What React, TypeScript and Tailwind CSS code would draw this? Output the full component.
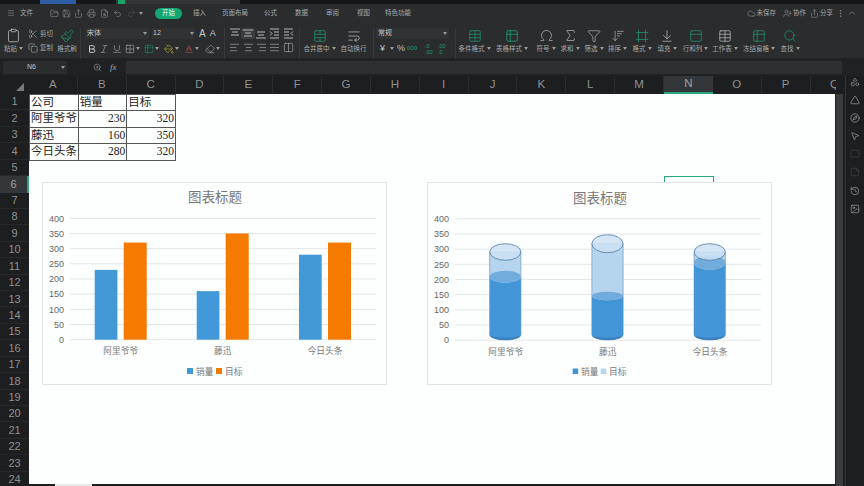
import {
  AlignCenter, AlignJustify, AlignLeft, AlignRight, Bold, ChevronUp, Clipboard, Cloud, Copy, Eraser, FileSearch,
  FolderOpen, Grid2x2, History, Image, Italic, Menu, MousePointer2, MoreVertical, PaintBucket, Paintbrush,
  Printer, Redo2, Save, Scissors, Search, Share, Sigma, Filter, Undo2, Underline, UserPlus, Omega, ZoomIn,
  Shapes, Compass, Triangle, MessageSquare, StickyNote, Columns2, Table2, Table, PanelTop, ArrowDownWideNarrow,
  Frame, ArrowDownToLine, Baseline, WrapText, TableCellsMerge,
} from "lucide-react"
import type { ReactNode } from "react"

const COLUMNS = ["A", "B", "C", "D", "E", "F", "G", "H", "I", "J", "K", "L", "M", "N", "O", "P", "Q"]
const ROWS = Array.from({ length: 24 }, (_, i) => i + 1)
const DATA = [
  { name: "阿里爷爷", sales: 230, target: 320 },
  { name: "藤迅", sales: 160, target: 350 },
  { name: "今日头条", sales: 280, target: 320 },
]
const TICKS = [0, 50, 100, 150, 200, 250, 300, 350, 400]
const CENTERS = [120.7, 222.7, 325]

const yOf = (v: number) => 339.7 - v * 0.3035

function Caret() {
  return (
    <svg width="4" height="3" viewBox="0 0 4 3" className="shrink-0">
      <path d="M0 0h4L2 3z" fill="#9a9a9a" />
    </svg>
  )
}

function Tool({ width, label, caret, children }: { width: string; label: string; caret?: boolean; children: ReactNode }) {
  return (
    <div className={`${width} flex flex-col items-center shrink-0`}>
      <div className="h-[15px] flex items-center justify-center">{children}</div>
      <div className="mt-[1px] flex items-center gap-[2px] text-[6.5px] leading-[9px] text-[#a6a8a8] whitespace-nowrap">
        {label}
        {caret && <Caret />}
      </div>
    </div>
  )
}

function Sep() {
  return <div className="w-px h-[32px] bg-[#37393b] shrink-0" />
}

function VAlign({ pos }: { pos: "top" | "mid" | "bottom" }) {
  const d = { top: "M1 1h10M3 4h6M2 7h8", mid: "M1 2h10M3 5h6M2 8h8", bottom: "M2 4h8M3 7h6M1 10h10" }[pos]
  return (
    <svg width="12" height="11" viewBox="0 0 12 11" fill="none" stroke="#b4b6b6" strokeWidth="1">
      <path d={d} />
    </svg>
  )
}

function Indent({ flip }: { flip?: boolean }) {
  return (
    <svg width="11" height="11" viewBox="0 0 11 11" fill="none" stroke="#b4b6b6" strokeWidth="1" className={flip ? "-scale-x-100" : ""}>
      <path d="M1 1h9M5 4h5M5 7h5M1 10h9M1 3.5 3 5.5 1 7.5" />
    </svg>
  )
}

function Ribbon() {
  const ic = "text-[#bfc1c1]"
  const gr = "text-[#1f9d72]"
  return (
    <div className="h-[36px] flex items-start pt-[6px]">
      {/* clipboard */}
      <div className="w-[80px] shrink-0 flex pl-[3px]">
        <Tool width="w-[21px]" label="粘贴" caret>
          <Clipboard size={15} strokeWidth={1.2} className={ic} />
        </Tool>
        <div className="w-[32px] pl-[4px] flex flex-col gap-[4px] pt-[1px] text-[6.5px] leading-[10px] text-[#a6a8a8]">
          <div className="flex items-center gap-[2px]"><Scissors size={10} strokeWidth={1.2} className={ic} />剪切</div>
          <div className="flex items-center gap-[2px]"><Copy size={10} strokeWidth={1.2} className={ic} />复制</div>
        </div>
        <Tool width="w-[22px]" label="格式刷">
          <Paintbrush size={14} strokeWidth={1.2} className={gr} />
        </Tool>
      </div>
      <Sep />
      {/* font */}
      <div className="w-[143px] shrink-0 pl-[4px] flex flex-col gap-[3px]">
        <div className="h-[11px] flex items-center text-[7px] text-[#c4c6c6]">
          <div className="w-[64px] h-[11px] bg-[#303234] flex items-center justify-between px-[2px]">宋体<Caret /></div>
          <div className="ml-[3px] w-[43px] h-[11px] bg-[#303234] flex items-center justify-between px-[1px]">12<Caret /></div>
          <span className="ml-[4px] text-[10px] leading-[11px] font-['Liberation_Sans',sans-serif]">A</span>
          <span className="ml-[4px] text-[9px] leading-[11px] font-['Liberation_Sans',sans-serif]">A</span>
        </div>
        <div className="h-[13px] flex items-center">
          <div className="w-[13px] flex justify-center"><Bold size={10} strokeWidth={2.2} className="text-[#d0d2d2]" /></div>
          <div className="w-[12px] flex justify-center"><Italic size={10} strokeWidth={1.2} className={ic} /></div>
          <div className="w-[13px] flex justify-center"><Underline size={10} strokeWidth={1.2} className={ic} /></div>
          <div className="w-[19px] flex justify-center items-center gap-[1px]"><Grid2x2 size={10} strokeWidth={1.2} className={ic} /><Caret /></div>
          <div className="w-[19px] flex justify-center items-center gap-[1px]"><Table2 size={10} strokeWidth={1.2} className={gr} /><Caret /></div>
          <div className="w-[21px] flex justify-center items-center gap-[1px]"><PaintBucket size={10} strokeWidth={1.2} className="text-[#d8c83c]" /><Caret /></div>
          <div className="w-[18px] flex justify-center items-center gap-[1px]"><Baseline size={10} strokeWidth={1.4} className="text-[#c2524a]" /><Caret /></div>
          <div className="w-[24px] flex justify-center items-center gap-[1px]"><Eraser size={10} strokeWidth={1.2} className={ic} /><Caret /></div>
        </div>
      </div>
      <Sep />
      {/* alignment */}
      <div className="w-[74px] shrink-0 pl-[3px]">
        <div className="w-[67px] grid grid-cols-5 gap-y-[3px] justify-items-center items-center">
          <VAlign pos="top" />
          <div className="bg-[#3a3c3e] rounded-[2px] px-[1px]"><VAlign pos="mid" /></div>
          <VAlign pos="bottom" />
          <Indent />
          <Indent flip />
          <AlignLeft size={11} strokeWidth={1.2} className={ic} />
          <AlignCenter size={11} strokeWidth={1.2} className={ic} />
          <AlignRight size={11} strokeWidth={1.2} className={ic} />
          <AlignJustify size={11} strokeWidth={1.2} className={ic} />
          <Columns2 size={11} strokeWidth={1.2} className={ic} />
        </div>
      </div>
      <Sep />
      {/* merge */}
      <div className="w-[73px] shrink-0 flex pl-[3px]">
        <Tool width="w-[33px]" label="合并居中" caret>
          <TableCellsMerge size={14} strokeWidth={1.2} className={gr} />
        </Tool>
        <Tool width="w-[35px]" label="自动换行">
          <WrapText size={14} strokeWidth={1.2} className={ic} />
        </Tool>
      </div>
      <Sep />
      {/* number */}
      <div className="w-[81px] shrink-0 pl-[2px] flex flex-col gap-[3px]">
        <div className="w-[73px] h-[11px] bg-[#303234] flex items-center justify-between px-[2px] text-[7px] text-[#c4c6c6]">常规<Caret /></div>
        <div className="h-[13px] flex items-center text-[9px] text-[#c4c6c6] font-['Liberation_Sans',sans-serif]">
          <span className="w-[12px] pl-[4px]">¥</span>
          <span className="ml-[2px]"><Caret /></span>
          <span className="ml-[3px]">%</span>
          <span className="ml-[2px] text-[6px] text-[#1f9d72]">000</span>
          <span className="ml-[8px] text-[5.5px] leading-[6px] text-[#1f9d72] w-[10px]">.0 .00</span>
          <span className="ml-[3px] text-[5.5px] leading-[6px] text-[#1f9d72] w-[10px]">.00 .0</span>
        </div>
      </div>
      <Sep />
      {/* tools */}
      <Tool width="w-[37px]" label="条件格式" caret><Table size={14} strokeWidth={1.2} className={gr} /></Tool>
      <Tool width="w-[38px]" label="表格样式" caret><Table2 size={14} strokeWidth={1.4} className={gr} /></Tool>
      <div className="w-[4px] shrink-0" />
      <Tool width="w-[22px]" label="符号" caret><Omega size={15} strokeWidth={1.1} className={ic} /></Tool>
      <div className="w-px shrink-0" />
      <Tool width="w-[24px]" label="求和" caret><Sigma size={15} strokeWidth={1.1} className={ic} /></Tool>
      <Tool width="w-[24px]" label="筛选" caret><Filter size={14} strokeWidth={1.1} className={ic} /></Tool>
      <Tool width="w-[23px]" label="排序" caret><ArrowDownWideNarrow size={14} strokeWidth={1.1} className={ic} /></Tool>
      <Tool width="w-[26px]" label="格式" caret><Frame size={14} strokeWidth={1.2} className={gr} /></Tool>
      <Tool width="w-[24px]" label="填充" caret><ArrowDownToLine size={14} strokeWidth={1.2} className={ic} /></Tool>
      <Tool width="w-[33px]" label="行和列" caret><PanelTop size={14} strokeWidth={1.2} className={gr} /></Tool>
      <Tool width="w-[26px]" label="工作表" caret><Table size={14} strokeWidth={1.2} className={ic} /></Tool>
      <Tool width="w-[42px]" label="冻结窗格" caret><Table2 size={14} strokeWidth={1.2} className={gr} /></Tool>
      <Tool width="w-[20px]" label="查找" caret><Search size={14} strokeWidth={1.2} className={gr} /></Tool>
    </div>
  )
}

function TabBar() {
  const ic = "text-[#a8aaaa]"
  return (
    <div className="h-[18px] flex items-center text-[6.5px] text-[#a8aaaa] whitespace-nowrap">
      <Menu size={8} strokeWidth={1.4} className={`ml-[7px] ${ic}`} />
      <span className="ml-[5px] w-[24px]">文件</span>
      <div className="w-[6px]" />
      <div className="flex items-center gap-[3px]">
        <FolderOpen size={9} strokeWidth={1.2} className={ic} />
        <Save size={9} strokeWidth={1.2} className={ic} />
        <Share size={9} strokeWidth={1.2} className={ic} />
        <Printer size={9} strokeWidth={1.2} className={`ml-[1px] ${ic}`} />
        <FileSearch size={9} strokeWidth={1.2} className={`ml-[1px] ${ic}`} />
        <Undo2 size={9} strokeWidth={1.2} className={`ml-[1px] ${ic}`} />
        <Redo2 size={9} strokeWidth={1.2} className="ml-[2px] text-[#58595a]" />
        <Caret />
      </div>
      <span className="ml-[12px] w-[27px] h-[11px] rounded-full bg-[#12a672] text-[#e8f5ef] flex items-center justify-center">开始</span>
      <span className="ml-[11px]">插入</span>
      <span className="ml-[16px]">页面布局</span>
      <span className="ml-[16px]">公式</span>
      <span className="ml-[18px]">数据</span>
      <span className="ml-[18px]">审阅</span>
      <span className="ml-[18px]">视图</span>
      <span className="ml-[15px]">特色功能</span>
      <div className="ml-auto flex items-center pr-[7px]">
        <Cloud size={9} strokeWidth={1.2} className={ic} />
        <span className="ml-[1px]">未保存</span>
        <UserPlus size={9} strokeWidth={1.2} className={`ml-[7px] ${ic}`} />
        <span className="ml-[1px]">协作</span>
        <Share size={9} strokeWidth={1.2} className={`ml-[4px] ${ic}`} />
        <span className="ml-[1px]">分享</span>
        <MoreVertical size={9} strokeWidth={1.2} className={`ml-[3px] ${ic}`} />
        <ChevronUp size={10} strokeWidth={1.2} className={`ml-[2px] ${ic}`} />
      </div>
    </div>
  )
}

function ChartFrame({ left, children, view }: { left: string; children: ReactNode; view: string }) {
  return (
    <div className={`absolute ${left} top-[88px] w-[345px] h-[203px] border border-[#dfe5e8] bg-[#fdffff]`}>
      <svg width="343" height="201" viewBox={view} className="block">
        <text x="215" y="202" textAnchor="middle" className="text-[13.5px] fill-[#777]">图表标题</text>
        {TICKS.map((t) => (
          <g key={t}>
            <line x1="70" x2="376" y1={yOf(t)} y2={yOf(t)} stroke="#e2e7ea" strokeWidth="1" />
            <text x="64" y={yOf(t) + 3.2} textAnchor="end" className="text-[9px] fill-[#666]">{t}</text>
          </g>
        ))}
        {DATA.map((d, i) => (
          <text key={d.name} x={CENTERS[i]} y="354" textAnchor="middle" className="text-[8.7px] fill-[#777]">{d.name}</text>
        ))}
        {children}
      </svg>
    </div>
  )
}

function BarChart() {
  return (
    <ChartFrame left="left-[13px]" view="43 183 343 201">
      {DATA.map((d, i) => {
        const x = [94.7, 196.7, 299][i]
        return (
          <g key={d.name}>
            <rect x={x} y={yOf(d.sales)} width="22.7" height={d.sales * 0.3035} fill="#4399d8" />
            <rect x={x + 29} y={yOf(d.target)} width="23" height={d.target * 0.3035} fill="#f57a00" />
          </g>
        )
      })}
      <rect x="187" y="368" width="6" height="6" fill="#4399d8" />
      <text x="196" y="374.5" className="text-[8.7px] fill-[#777]">销量</text>
      <rect x="216" y="368" width="6" height="6" fill="#f57a00" />
      <text x="225" y="374.5" className="text-[8.7px] fill-[#777]">目标</text>
    </ChartFrame>
  )
}

function Cylinder({ cx, top, topRy, level, levelRy }: { cx: number; top: number; topRy: number; level: number; levelRy: number }) {
  const rx = 15.6
  const bottom = 334.2
  const bodyBack = `M${cx - rx} ${top}V${bottom}A${rx} 5.3 0 0 0 ${cx + rx} ${bottom}V${top}Z`
  const liquid = `M${cx - rx} ${level}V${bottom}A${rx} 5.3 0 0 0 ${cx + rx} ${bottom}V${level}A${rx} ${levelRy} 0 0 1 ${cx - rx} ${level}Z`
  return (
    <g>
      <path d={bodyBack} fill="#b5d4ee" stroke="#7fa3c0" strokeWidth="0.8" />
      <path d={liquid} fill="#4295d6" />
      <path d={`M${cx - rx} ${bottom}A${rx} 5.3 0 0 0 ${cx + rx} ${bottom}A${rx} 3 0 0 1 ${cx - rx} ${bottom}Z`} fill="#3a80bd" />
      <ellipse cx={cx} cy={level} rx={rx} ry={levelRy} fill="#72acdc" />
      <ellipse cx={cx} cy={top} rx={rx} ry={topRy} fill="#cde2f4" fillOpacity="0.85" stroke="#5f86a6" strokeWidth="0.9" />
    </g>
  )
}

function CylinderChart() {
  return (
    <ChartFrame left="left-[398px]" view="43 182.5 343 201">
      <Cylinder cx={120.3} top={251.5} topRy={8.3} level={276.2} levelRy={6} />
      <Cylinder cx={222.5} top={243.2} topRy={9} level={295.5} levelRy={4.2} />
      <Cylinder cx={324.7} top={251.5} topRy={8.3} level={262.2} levelRy={7.3} />
      <rect x="187.7" y="368" width="5.5" height="5.5" fill="#4295d6" />
      <text x="196" y="374.5" className="text-[8.7px] fill-[#777]">销量</text>
      <rect x="215.7" y="368" width="5.5" height="5.5" fill="#b5d4ee" />
      <text x="224" y="374.5" className="text-[8.7px] fill-[#777]">目标</text>
    </ChartFrame>
  )
}

function SideBar() {
  const ic = "text-[#b0b2b2]"
  const dim = "text-[#4c4e50]"
  return (
    <div className="w-[19px] h-full border-l border-[#33353a] flex flex-col items-center gap-[8px]">
      <Shapes size={10} strokeWidth={1.3} className={`mt-[1px] ${ic}`} />
      <Triangle size={10} strokeWidth={1.5} className={ic} />
      <Compass size={10} strokeWidth={1.5} className={ic} />
      <MousePointer2 size={10} strokeWidth={1.4} className={ic} />
      <MessageSquare size={10} strokeWidth={1.3} className={dim} />
      <StickyNote size={10} strokeWidth={1.3} className={dim} />
      <History size={10} strokeWidth={1.4} className={`mt-[1px] ${ic}`} />
      <Image size={10} strokeWidth={1.4} className={ic} />
    </div>
  )
}

export default function App() {
  return (
    <div className="w-[864px] h-[486px] overflow-hidden flex flex-col bg-[#1c1e20] font-['Liberation_Sans','Noto_Sans_CJK_SC',sans-serif]">
      {/* window strip */}
      <div className="h-[4px] flex bg-[#161718] shrink-0">
        <div className="ml-[40px] w-[36px] bg-[#2b5ba3]" />
        <div className="ml-[40px] w-[124px] bg-[#333536] flex">
          <div className="ml-[2px] w-[7px] bg-[#17a567]" />
        </div>
      </div>

      {/* tabs and ribbon */}
      <div className="h-[55px] shrink-0 bg-[#2a2c2e] border-b border-[#202224]">
        <TabBar />
        <Ribbon />
      </div>

      {/* formula bar */}
      <div className="h-[17px] shrink-0 bg-[#1f2123] flex items-center pl-[3px] pr-[22px]">
        <div className="w-[64px] h-[13px] bg-[#2a2c2e] flex items-center justify-between pl-[24px] pr-[2px] text-[7px] text-[#c4c6c6]">
          N6<Caret />
        </div>
        <ZoomIn size={9} strokeWidth={1.3} className="ml-[26px] text-[#a8aaaa]" />
        <span className="ml-[8px] text-[9px] italic text-[#a8aaaa] font-['Liberation_Serif',serif]">fx</span>
        <div className="ml-[9px] flex-1 h-[13px] bg-[#2d2f31]" />
      </div>

      <div className="flex-1 flex min-h-0">
        {/* grid */}
        <div className="w-[836px] shrink-0 flex flex-col">
          <div className="h-[18px] shrink-0 flex overflow-hidden bg-[#1c1e20]">
            <div className="w-[29px] shrink-0 flex items-end justify-end pr-[5px] pb-[3px]">
              <div className="w-0 h-0 border-l-[8px] border-l-transparent border-b-[8px] border-b-[#77797a]" />
            </div>
            {COLUMNS.map((c) => (
              <div
                key={c}
                className={
                  c === "N"
                    ? "w-[48.85px] shrink-0 flex items-center justify-center text-[11.5px] text-[#a0a2a2] bg-[#33373a] border-b-[2px] border-[#2aa67c]"
                    : "w-[48.85px] shrink-0 flex items-center justify-center text-[11.5px] text-[#8f9191] border-r border-[#2a2c2e]"
                }
              >
                {c}
              </div>
            ))}
          </div>
          <div className="flex-1 flex min-h-0">
            <div className="w-[29px] shrink-0">
              {ROWS.map((r) => (
                <div
                  key={r}
                  className={
                    r === 6
                      ? "h-[16.43px] flex items-center justify-center text-[11px] text-[#a0a2a2] bg-[#33373a] border-r-[2px] border-[#2aa67c]"
                      : "h-[16.43px] flex items-center justify-center text-[11px] text-[#8f9191] border-b border-[#26282a]"
                  }
                >
                  {r}
                </div>
              ))}
            </div>
            <div className="w-[806px] flex flex-col">
              <div className="h-[390px] relative bg-[#fdffff] overflow-hidden">
                <table className="border-collapse table-fixed w-[147px] text-[11.5px] text-[#222]">
                  <tbody>
                    <tr className="h-[16.4px]">
                      <td className="border border-[#555] px-[1px] leading-none">公司</td>
                      <td className="border border-[#555] px-[1px] leading-none">销量</td>
                      <td className="border border-[#555] px-[1px] leading-none">目标</td>
                    </tr>
                    {DATA.map((d) => (
                      <tr key={d.name} className="h-[16.4px]">
                        <td className="border border-[#555] px-[1px] leading-none whitespace-nowrap">{d.name}</td>
                        <td className="border border-[#555] px-[1px] leading-none text-right font-['Liberation_Serif',serif]">{d.sales}</td>
                        <td className="border border-[#555] px-[1px] leading-none text-right font-['Liberation_Serif',serif]">{d.target}</td>
                      </tr>
                    ))}
                  </tbody>
                </table>
                {/* selected cell, mostly under the chart */}
                <div className="absolute left-[635px] top-[82px] w-[50px] h-[17px] border-[1.5px] border-[#2aa67c]" />
                <BarChart />
                <CylinderChart />
              </div>
              {/* sheet tab peeking in at the bottom */}
              <div className="h-[2px] ml-[26px] w-[37px] bg-[#e8eaea]" />
            </div>
            <div className="w-px" />
          </div>
        </div>
        {/* scrollbar */}
        <div className="w-[9px] shrink-0 flex justify-start pt-[18px]">
          <div className="w-[7px] h-full bg-[#3a3c3e]" />
        </div>
        <SideBar />
      </div>
    </div>
  )
}
